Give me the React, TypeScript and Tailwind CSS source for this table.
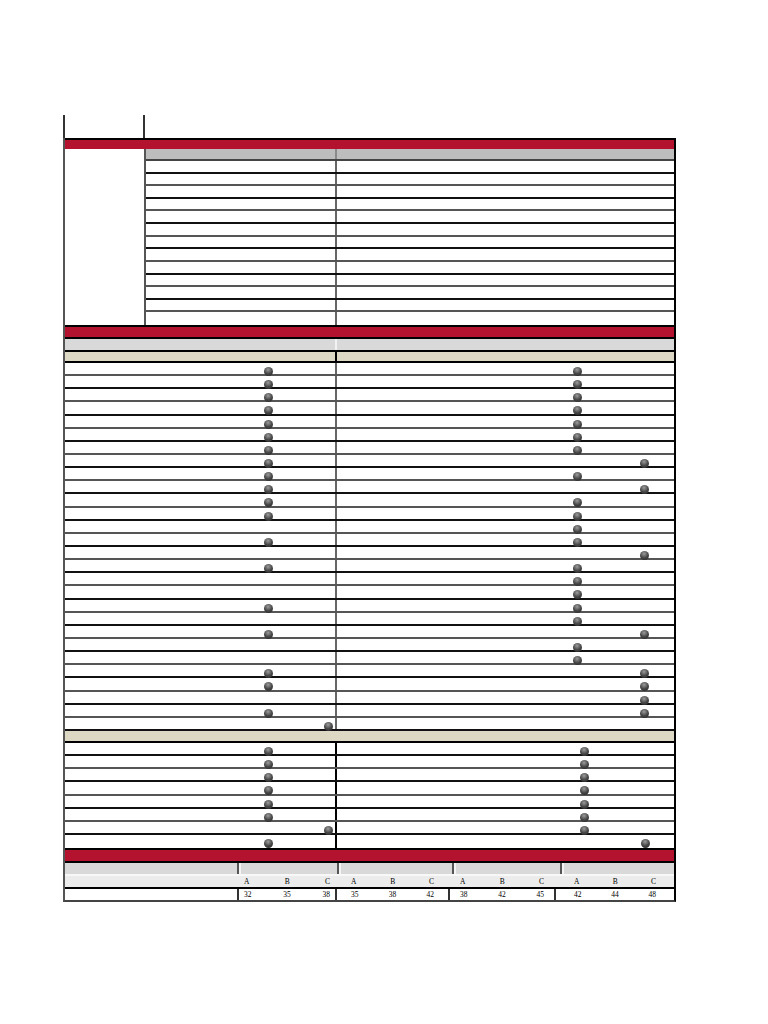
import React from "react";

// dot offsets (from cell left edge) for each body row
type Row = { l?: string; r?: string };

const DOT_L: Record<string, string> = {
  a: "ml-[199px]",
  b: "ml-[259px]",
};
const DOT_R: Record<string, string> = {
  a: "ml-[236px]",
  b: "ml-[303px]",
  c: "ml-[243px]",
  d: "ml-[304px]",
};

const upper: Row[] = [
  { l: "a", r: "a" },
  { l: "a", r: "a" },
  { l: "a", r: "a" },
  { l: "a", r: "a" },
  { l: "a", r: "a" },
  { l: "a", r: "a" },
  { l: "a", r: "a" },
  { l: "a", r: "b" },
  { l: "a", r: "a" },
  { l: "a", r: "b" },
  { l: "a", r: "a" },
  { l: "a", r: "a" },
  { r: "a" },
  { l: "a", r: "a" },
  { r: "b" },
  { l: "a", r: "a" },
  { r: "a" },
  { r: "a" },
  { l: "a", r: "a" },
  { r: "a" },
  { l: "a", r: "b" },
  { r: "a" },
  { r: "a" },
  { l: "a", r: "b" },
  { l: "a", r: "b" },
  { r: "b" },
  { l: "a", r: "b" },
  { l: "b" },
];

const lower: Row[] = [
  { l: "a", r: "c" },
  { l: "a", r: "c" },
  { l: "a", r: "c" },
  { l: "a", r: "c" },
  { l: "a", r: "c" },
  { l: "a", r: "c" },
  { l: "b", r: "c" },
  { l: "a", r: "d" },
];

const sizes = [
  { w: "w-[98px]", pad: "px-[5px]", v: ["32", "35", "38"] },
  { w: "w-[113px]", pad: "px-[14px]", v: ["35", "38", "42"] },
  { w: "w-[106px]", pad: "px-[10px]", v: ["38", "42", "45"] },
  { w: "flex-1", pad: "px-[18px]", v: ["42", "44", "48"] },
];

function Dot({ cls }: { cls: string }) {
  return (
    <span
      className={`${cls} relative z-10 mt-[4px] block h-[9px] w-[9px] shrink-0 rounded-full bg-[radial-gradient(circle_at_45%_30%,#9c9c9c,#484848_50%,#2a2a2a_85%)]`}
    />
  );
}

function Band({ h }: { h: string }) {
  return <div className={`${h} border-t-2 border-black bg-[#b3132f]`} />;
}

export default function App() {
  return (
    <div
      className="min-h-[1024px] bg-white pl-[63px] pt-[115px] text-black antialiased"
      style={{ fontFamily: '"Liberation Serif", serif' }}
    >
      <div className="w-[613px]">
        {/* top left box */}
        <div className="h-[23px] w-[82px] border-x-2 border-[#333]" />

        <div className="border-b-2 border-l-2 border-r-2 border-b-[#444] border-l-[#555] border-r-black">
          <Band h="h-[11px]" />

          {/* first block */}
          <div className="flex">
            <div className="w-[79px] shrink-0" />
            <div className="flex-1 border-l-2 border-[#555]">
              <div className="flex h-[12px] border-b-2 border-[#444] bg-[#bdbdbd]">
                <div className="w-[191px] border-r-2 border-[#8a8a8a]" />
                <div className="flex-1" />
              </div>
              <div className="grid h-[164px] grid-rows-[repeat(13,minmax(0,1fr))]">
                {Array.from({ length: 13 }).map((_, i) => (
                  <div
                    key={i}
                    className={`flex ${i === 12 ? "" : "border-b-2"} ${i % 2 ? "border-[#555]" : "border-[#111]"}`}
                  >
                    <div className="w-[191px] border-r-2 border-[#666]" />
                    <div className="flex-1" />
                  </div>
                ))}
              </div>
            </div>
          </div>

          <Band h="h-[12px]" />

          {/* second block header */}
          <div className="flex h-[13px] border-t-2 border-black bg-[#d9d9d9]">
            <div className="w-[272px] border-r-2 border-[#f2f2f2]" />
            <div className="flex-1" />
          </div>
          <div className="flex h-[13px] border-y-2 border-black bg-[#ddd8c3]">
            <div className="w-[272px] border-r-2 border-black" />
            <div className="flex-1" />
          </div>

          <div className="grid h-[368px] grid-rows-[repeat(28,minmax(0,1fr))]">
            {upper.map((r, i) => (
              <div
                key={i}
                className={`flex min-h-0 border-b-2 ${i % 2 ? "border-[#111]" : "border-[#555]"}`}
              >
                <div className="flex w-[272px] border-r-2 border-[#666]">
                  {r.l && <Dot cls={DOT_L[r.l]} />}
                </div>
                <div className="flex flex-1">{r.r && <Dot cls={DOT_R[r.r]} />}</div>
              </div>
            ))}
          </div>

          <div className="h-[12px] border-b-2 border-black bg-[#ddd8c3]" />

          <div className="grid h-[105px] grid-rows-[repeat(8,minmax(0,1fr))]">
            {lower.map((r, i) => (
              <div
                key={i}
                className={`flex min-h-0 ${i === 7 ? "" : "border-b-2"} ${i % 2 ? "border-[#555]" : "border-[#111]"}`}
              >
                <div className="flex w-[272px] border-r-2 border-black">
                  {r.l && <Dot cls={DOT_L[r.l]} />}
                </div>
                <div className="flex flex-1">{r.r && <Dot cls={DOT_R[r.r]} />}</div>
              </div>
            ))}
          </div>

          <Band h="h-[13px]" />

          {/* sizes table */}
          <div className="flex h-[13px] border-t-2 border-black bg-[#f4f4f4]">
            <div className="w-[174px] border-r-2 border-[#555] bg-[#d9d9d9]" />
            {sizes.map((s, i) => (
              <div
                key={i}
                className={`${s.w} ${i < 3 ? "border-r-2 border-[#555]" : ""} ml-[2px] bg-[#d9d9d9]`}
              />
            ))}
          </div>
          <div className="flex h-[13px] border-t-2 border-[#f8f8f8] bg-[#ececec] text-[7.5px] leading-[11px]">
            <div className="w-[174px] border-r-2 border-transparent" />
            {sizes.map((s, i) => (
              <div
                key={i}
                className={`${s.w} ${s.pad} ${i < 3 ? "border-r-2 border-transparent" : ""} flex justify-between`}
              >
                <span>A</span>
                <span>B</span>
                <span>C</span>
              </div>
            ))}
          </div>
          <div className="flex h-[13px] border-t-2 border-black text-[7.5px] leading-[11px]">
            <div className="w-[174px] border-r-2 border-[#333]" />
            {sizes.map((s, i) => (
              <div
                key={i}
                className={`${s.w} ${s.pad} ${i < 3 ? "border-r-2 border-[#333]" : ""} flex justify-between`}
              >
                {s.v.map((n) => (
                  <span key={n}>{n}</span>
                ))}
              </div>
            ))}
          </div>
        </div>
      </div>
    </div>
  );
}
